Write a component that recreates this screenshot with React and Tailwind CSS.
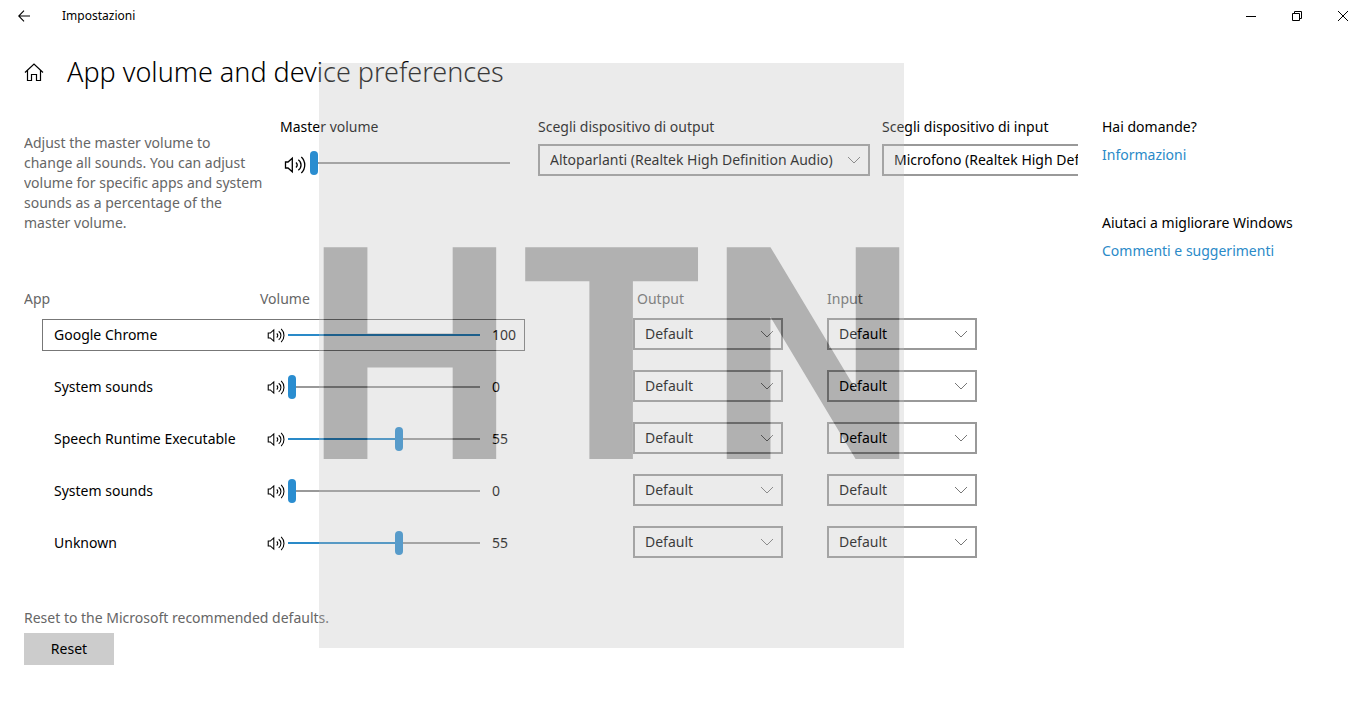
import { useState } from 'react';

const SERVICES = [
    { name: 'Google Chrome', level: 100, volume: 100, selected: true },
    { name: 'System sounds', level: 0, volume: 0 },
    { name: 'Speech Runtime Executable', level: 58, volume: 55 },
    { name: 'System sounds', level: 0, volume: 0 },
    { name: 'Unknown', level: 58, volume: 55 },
];

const SpeakerIcon = ({ className }) => (
    <svg viewBox="0 0 22 18" fill="none" stroke="currentColor" strokeWidth="1.3" className={className} aria-hidden="true">
        <path d="M1.500 6h2.500L8.300 2.200v13.600L4 12H1.500z" />
        <path d="M12 6.500a3.600 3.600 0 0 1 0 5M14.300 3.800a6.300 6.300 0 0 1 0 10.400M17.300 1a11 11 0 0 1 0 16" />
    </svg>
);

const Slider = ({ label, initial, hideThumb }) => {
    const [level, setLevel] = useState(initial);

    return (
        <input
            type="range"
            aria-label={label}
            value={level}
            onChange={(e) => setLevel(Number(e.target.value))}
            style={{ backgroundImage: `linear-gradient(to right, #2a8ac8 ${level}%, #999999 ${level}%)` }}
            className={`h-6 min-w-0 flex-1 appearance-none bg-[length:100%_2px] bg-center bg-no-repeat [&::-webkit-slider-thumb]:h-6 [&::-webkit-slider-thumb]:w-2 [&::-webkit-slider-thumb]:appearance-none [&::-webkit-slider-thumb]:rounded-full [&::-webkit-slider-thumb]:bg-[#2a8dd0] ${hideThumb ? '[&::-webkit-slider-thumb]:opacity-0' : ''}`}
        />
    );
};

const Dropdown = ({ id, label, value, className }) => (
    <div className={`relative ${className || ''}`}>
        <select
            id={id}
            aria-label={label}
            className="block h-8 w-full appearance-none border-2 border-[#999999] bg-white pl-[10px] pr-6"
        >
            <option>{value}</option>
        </select>
        <svg viewBox="0 0 14 8" fill="none" stroke="#777777" className="pointer-events-none absolute right-[9px] top-3 h-2 w-[14px]" aria-hidden="true">
            <path d="M1 1l6 6 6-6" />
        </svg>
    </div>
);

const TitleBar = () => (
    <header className="flex h-8 items-center text-xs">
        <button aria-label="Back" className="flex h-8 w-12 items-center justify-center">
            <svg viewBox="0 0 12 12" fill="none" stroke="currentColor" className="h-3 w-3" aria-hidden="true">
                <path d="M12 6H.7M6 .7L.7 6 6 11.3" strokeWidth="1.1" />
            </svg>
        </button>
        <span className="ml-[14px] flex-1">Impostazioni</span>
        <button aria-label="Minimize" className="flex h-8 w-[46px] items-center justify-center">
            <svg viewBox="0 0 10 10" stroke="currentColor" className="h-[10px] w-[10px]" aria-hidden="true">
                <path d="M0 5.5h10" />
            </svg>
        </button>
        <button aria-label="Restore" className="flex h-8 w-[46px] items-center justify-center">
            <svg viewBox="0 0 10 10" fill="none" stroke="currentColor" className="h-[10px] w-[10px]" aria-hidden="true">
                <path d="M.5 2.5h7v7h-7zM2.5 2.5v-2h7v7h-2" />
            </svg>
        </button>
        <button aria-label="Close" className="flex h-8 w-[46px] items-center justify-center">
            <svg viewBox="0 0 10 10" stroke="currentColor" className="h-[10px] w-[10px]" aria-hidden="true">
                <path d="M0 0l10 10M10 0L0 10" />
            </svg>
        </button>
    </header>
);

const DeviceSettings = () => (
    <section className="flex">
        <p className="w-64 shrink-0 pt-4 text-[#666666]">
            Adjust the master volume to<br />
            change all sounds. You can adjust<br />
            volume for specific apps and system<br />
            sounds as a percentage of the<br />
            master volume.
        </p>
        <div className="mr-7 w-[230px] shrink-0">
            <h2>Master volume</h2>
            <div className="mt-[14px] flex items-center">
                <SpeakerIcon className="mx-1 mt-1 h-[18px] w-[22px]" />
                <Slider label="Master volume" initial={0} />
            </div>
        </div>
        <div className="mr-3 w-[332px] shrink-0">
            <label htmlFor="output" className="mb-[7px] block">Scegli dispositivo di output</label>
            <Dropdown id="output" value="Altoparlanti (Realtek High Definition Audio)" />
        </div>
        <div className="w-[332px] shrink-0">
            <label htmlFor="input" className="mb-[7px] block">Scegli dispositivo di input</label>
            <Dropdown id="input" value="Microfono (Realtek High Definition Audio)" />
        </div>
    </section>
);

const AppTable = () => (
    <table className="mt-14 table-fixed">
        <thead className="text-left text-[#666666]">
            <tr className="h-[29px] align-top">
                <th className="w-[236px] font-normal">App</th>
                <th className="w-[373px] font-normal">Volume</th>
                <th className="w-[194px] pl-1 font-normal">Output</th>
                <th className="w-[150px] font-normal">Input</th>
            </tr>
        </thead>
        <tbody>
            {SERVICES.map((app, i) => (
                <tr key={i} className="h-[52px] align-top">
                    <td className="pt-px">
                        <div className={`ml-[18px] flex h-8 items-center border border-r-0 pl-[11px] ${app.selected ? 'border-[#777777]' : 'border-transparent'}`}>
                            {app.name}
                        </div>
                    </td>
                    <td className="pt-px">
                        <div className={`flex h-8 w-[265px] items-center border border-l-0 pl-[7px] ${app.selected ? 'border-[#777777]' : 'border-transparent'}`}>
                            <SpeakerIcon className="mr-[3px] h-[15px] w-[18px]" />
                            <Slider label={`${app.name} volume`} initial={app.level} hideThumb={app.level === 100} />
                            <span className="ml-3 w-8">{app.volume}</span>
                        </div>
                    </td>
                    <td>
                        <Dropdown label={`${app.name} output`} value="Default" className="w-[150px]" />
                    </td>
                    <td>
                        <Dropdown label={`${app.name} input`} value="Default" className="w-[150px]" />
                    </td>
                </tr>
            ))}
        </tbody>
    </table>
);

const HelpPanel = () => (
    <aside className="w-60 shrink-0">
        <h2>Hai domande?</h2>
        <a href="#info" className="mt-2 block text-[#2a8ac8]">Informazioni</a>
        <h2 className="mt-12">Aiutaci a migliorare Windows</h2>
        <a href="#feedback" className="mt-2 block text-[#2a8ac8]">Commenti e suggerimenti</a>
    </aside>
);

// Semi-transparent HTN logo laid over the window
const Watermark = () => (
    <div className="pointer-events-none absolute left-[319px] top-[63px] flex h-[585px] w-[585px] items-center justify-center gap-1 bg-[#bebebe] pt-1 font-['Roboto',sans-serif] text-[298px] font-bold leading-none text-black opacity-30">
        <span>H</span>
        <span>T</span>
        <span>N</span>
    </div>
);

export default function App() {
    return (
        <div className="relative min-h-screen overflow-hidden bg-white font-['Noto_Sans','Open_Sans',sans-serif] text-sm leading-5 text-black">
            <TitleBar />
            <h1 className="mt-5 flex h-10 items-center pl-6 text-[27px] font-light">
                <svg viewBox="0 0 20 20" fill="none" stroke="currentColor" className="mr-[23px] h-5 w-5" aria-hidden="true">
                    <path d="M1 10.500L10 2l9 8.500M3.500 8.500v10h4v-6h5v6h4v-10" strokeWidth="1.2" />
                </svg>
                App volume and device preferences
            </h1>
            <div className="mt-[25px] flex gap-6 px-6">
                <main className="min-w-0 flex-1 overflow-hidden">
                    <DeviceSettings />
                    <AppTable />
                    <p className="mt-[30px] text-[#666666]">Reset to the Microsoft recommended defaults.</p>
                    <button className="mt-[5px] h-8 w-[90px] bg-[#cccccc]">Reset</button>
                </main>
                <HelpPanel />
            </div>
            <Watermark />
        </div>
    );
}
